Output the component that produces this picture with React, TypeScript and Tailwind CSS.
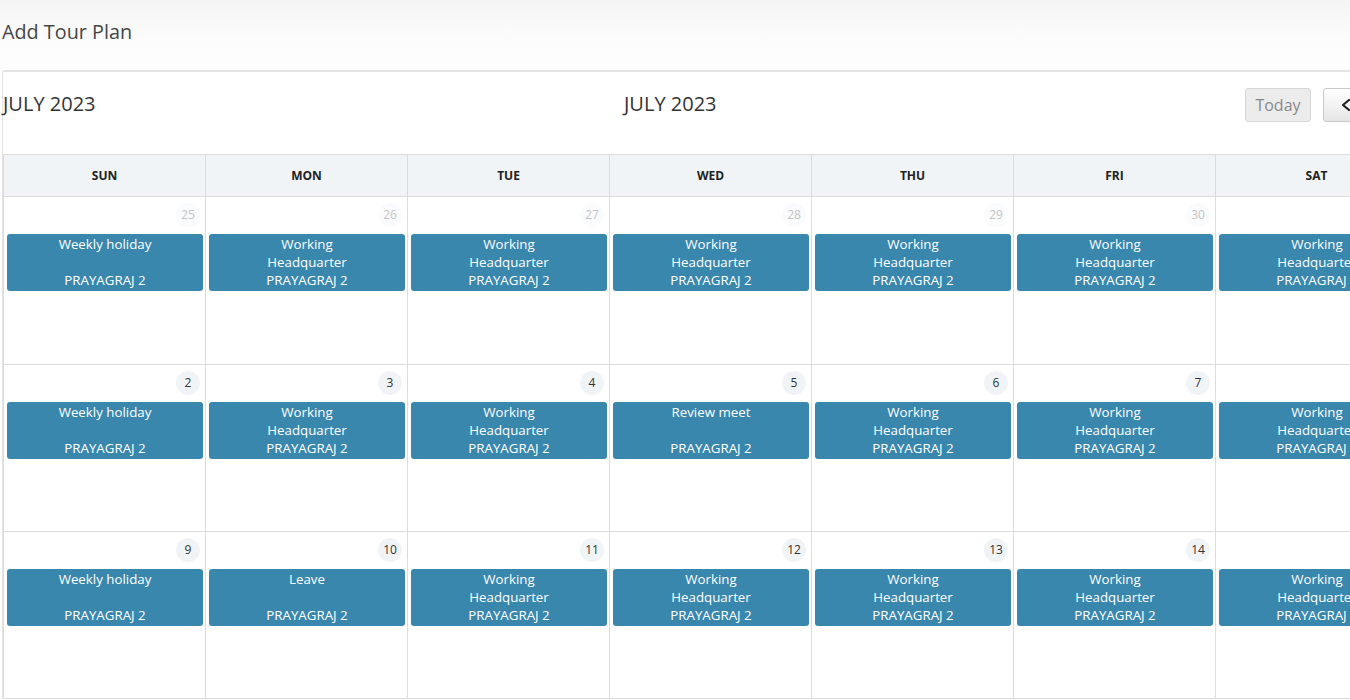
import React from "react";

type Ev = { title: string; sub: string };
type Cell = { day: number; other?: boolean; ev: Ev };

const W: Ev = { title: "Working", sub: "Headquarter" };
const H: Ev = { title: "Weekly holiday", sub: "" };
const R: Ev = { title: "Review meet", sub: "" };
const L: Ev = { title: "Leave", sub: "" };

const weeks: Cell[][] = [
  [
    { day: 25, other: true, ev: H },
    { day: 26, other: true, ev: W },
    { day: 27, other: true, ev: W },
    { day: 28, other: true, ev: W },
    { day: 29, other: true, ev: W },
    { day: 30, other: true, ev: W },
    { day: 1, ev: W },
  ],
  [
    { day: 2, ev: H },
    { day: 3, ev: W },
    { day: 4, ev: W },
    { day: 5, ev: R },
    { day: 6, ev: W },
    { day: 7, ev: W },
    { day: 8, ev: W },
  ],
  [
    { day: 9, ev: H },
    { day: 10, ev: L },
    { day: 11, ev: W },
    { day: 12, ev: W },
    { day: 13, ev: W },
    { day: 14, ev: W },
    { day: 15, ev: W },
  ],
];

const days = ["SUN", "MON", "TUE", "WED", "THU", "FRI", "SAT"];

function DayCell({ c, h }: { c: Cell; h: string }) {
  return (
    <div className={`border-l border-b border-[#dcdcdc] ${h} flex flex-col`}>
      <div className="flex justify-end pt-[6px] pr-[5px]">
        <div
          className={`w-6 h-6 rounded-full flex items-center justify-center text-[12px] ${
            c.other ? "bg-[#fafbfc] text-[#c4c4c4]" : "bg-[#f1f4f7] text-[#333]"
          }`}
        >
          {c.day}
        </div>
      </div>
      <div className="mt-[7px] ml-[3px] mr-[2px] h-[57px] rounded-[3px] bg-[#3a87ad] text-white text-[13.3px] leading-[18px] pt-[1px] text-center whitespace-nowrap overflow-hidden">
        <div>{c.ev.title}</div>
        <div className="h-[18px]">{c.ev.sub}</div>
        <div>PRAYAGRAJ 2</div>
      </div>
    </div>
  );
}

export default function App() {
  return (
    <div
      className="w-[1350px] h-[700px] overflow-hidden bg-white"
      style={{ fontFamily: "'Open Sans', 'Noto Sans', sans-serif" }}
    >
      <div className="h-[70px] bg-gradient-to-b from-[#f5f5f5] via-[#fbfbfb] to-[#fefefe] flex items-start pt-[19px] pl-[2px]">
        <h1 className="text-[19.8px] leading-[26px] font-medium text-[#454545]">Add Tour Plan</h1>
      </div>
      <div className="ml-[2px] w-[1420px] border-t-2 border-l border-[#e3e3e3] rounded-tl-[3px] bg-white">
        <div className="h-[82px] flex items-start">
          <div className="w-[621px] pt-[19px] text-[20px] leading-[26px] font-medium text-[#333]">
            JULY 2023
          </div>
          <div className="w-[621px] pt-[19px] text-[20px] leading-[26px] font-medium text-[#333]">
            JULY 2023
          </div>
          <div className="flex items-center gap-3 pt-[16px]">
            <div className="w-[66px] h-[34px] rounded-[3px] border border-[#d6d6d6] bg-[#ececec] text-[#8a8a8a] text-[16px] flex items-center justify-center">
              Today
            </div>
            <div className="w-[44px] h-[34px] rounded-[3px] border border-[#c8c8c8] bg-gradient-to-b from-white to-[#e6e6e6] flex items-center pl-[16px] text-[#222]">
              <svg width="12" height="14" viewBox="0 0 12 14" fill="none">
                <path d="M9 2 L3 7 L9 12" stroke="currentColor" strokeWidth="2.2" strokeLinecap="round" strokeLinejoin="round" />
              </svg>
            </div>
          </div>
        </div>
        <div className="grid grid-cols-[repeat(7,202px)] border-t border-[#dcdcdc]">
          {days.map((d) => (
            <div
              key={d}
              className="h-[42px] bg-[#f1f4f7] border-l border-b border-[#dcdcdc] flex items-center justify-center text-[12px] font-bold text-[#222]"
            >
              {d}
            </div>
          ))}
          {weeks.map((w, wi) =>
            w.map((c) => (
              <DayCell key={`${wi}-${c.day}`} c={c} h={wi === 0 ? "h-[168px]" : "h-[167px]"} />
            ))
          )}
        </div>
      </div>
    </div>
  );
}
